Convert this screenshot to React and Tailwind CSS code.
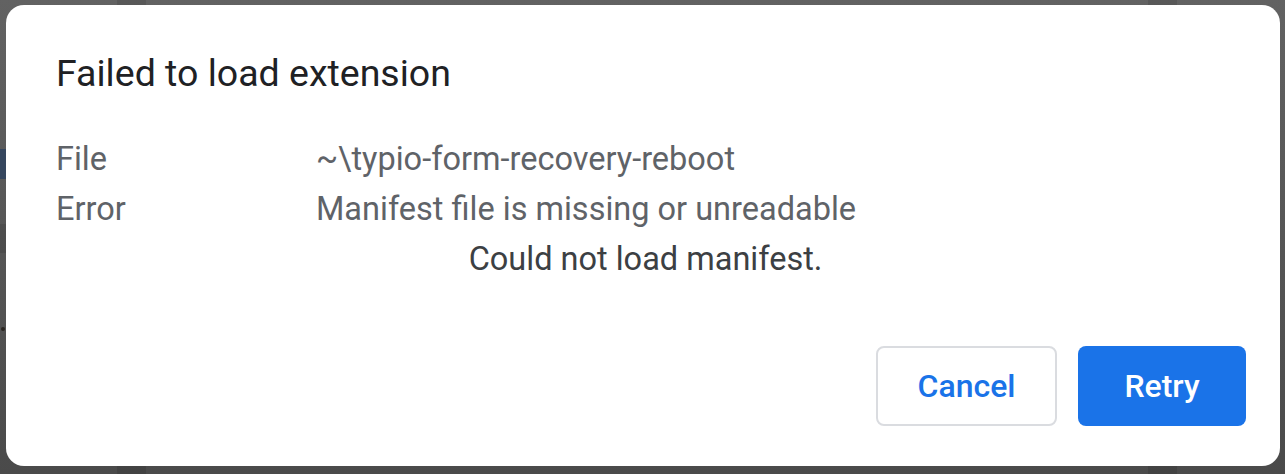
import React from "react"

const rows = [
  { label: "File", value: "~\\typio-form-recovery-reboot" },
  { label: "Error", value: "Manifest file is missing or unreadable" },
]

export default function App() {
  return (
    <div
      className="relative h-[474px] w-full overflow-hidden bg-gradient-to-b from-[#626262] to-[#4a4a4a]"
      style={{ fontFamily: "Roboto, 'Noto Sans', Arial, sans-serif" }}
    >
      {/* page behind the overlay */}
      <div className="absolute inset-0 flex">
        <div className="w-[6px] flex flex-col">
          <div className="h-[149px]" />
          <div className="h-[30px] bg-[#35465e]" />
          <div className="h-[45px]" />
          <div className="h-[29px] bg-black/10" />
          <div className="h-[74px]" />
          <div className="ml-[1px] h-[4px] w-[4px] rounded-full bg-[#2a2520]" />
        </div>
        <div className="w-[111px]" />
        <div className="w-[29px] bg-black/10" />
        <div className="w-[1002px]" />
        <div className="w-[29px] bg-black/10" />
      </div>

      <Dialog />
    </div>
  )
}

function Dialog() {
  return (
    <div className="relative ml-[6px] mr-[5px] mt-[5px] flex h-[461px] flex-col rounded-[18px] bg-white pl-[50px] pr-[34px] pt-[46px] pb-[40px]">
      <h1 className="text-[37.5px] leading-[44px] font-normal text-[#202124]">
        Failed to load extension
      </h1>

      <div className="mt-[39px] text-[32.5px] leading-[50px]">
        {rows.map((r) => (
          <div key={r.label} className="flex">
            <span className="w-[260px] shrink-0 text-[#5f6368]">{r.label}</span>
            <span className="text-[#5f6368]">{r.value}</span>
          </div>
        ))}
        <p className="pr-[11px] text-center text-[#3c4043]">Could not load manifest.</p>
      </div>

      <div className="mt-auto flex justify-end gap-[21px]">
        <button className="h-[80px] w-[181px] rounded-[8px] border-2 border-[#dadce0] bg-white text-[32px] font-medium text-[#1a73e8]">
          Cancel
        </button>
        <button className="h-[80px] w-[168px] rounded-[8px] bg-[#1a73e8] text-[32px] font-medium text-white">
          Retry
        </button>
      </div>
    </div>
  )
}
